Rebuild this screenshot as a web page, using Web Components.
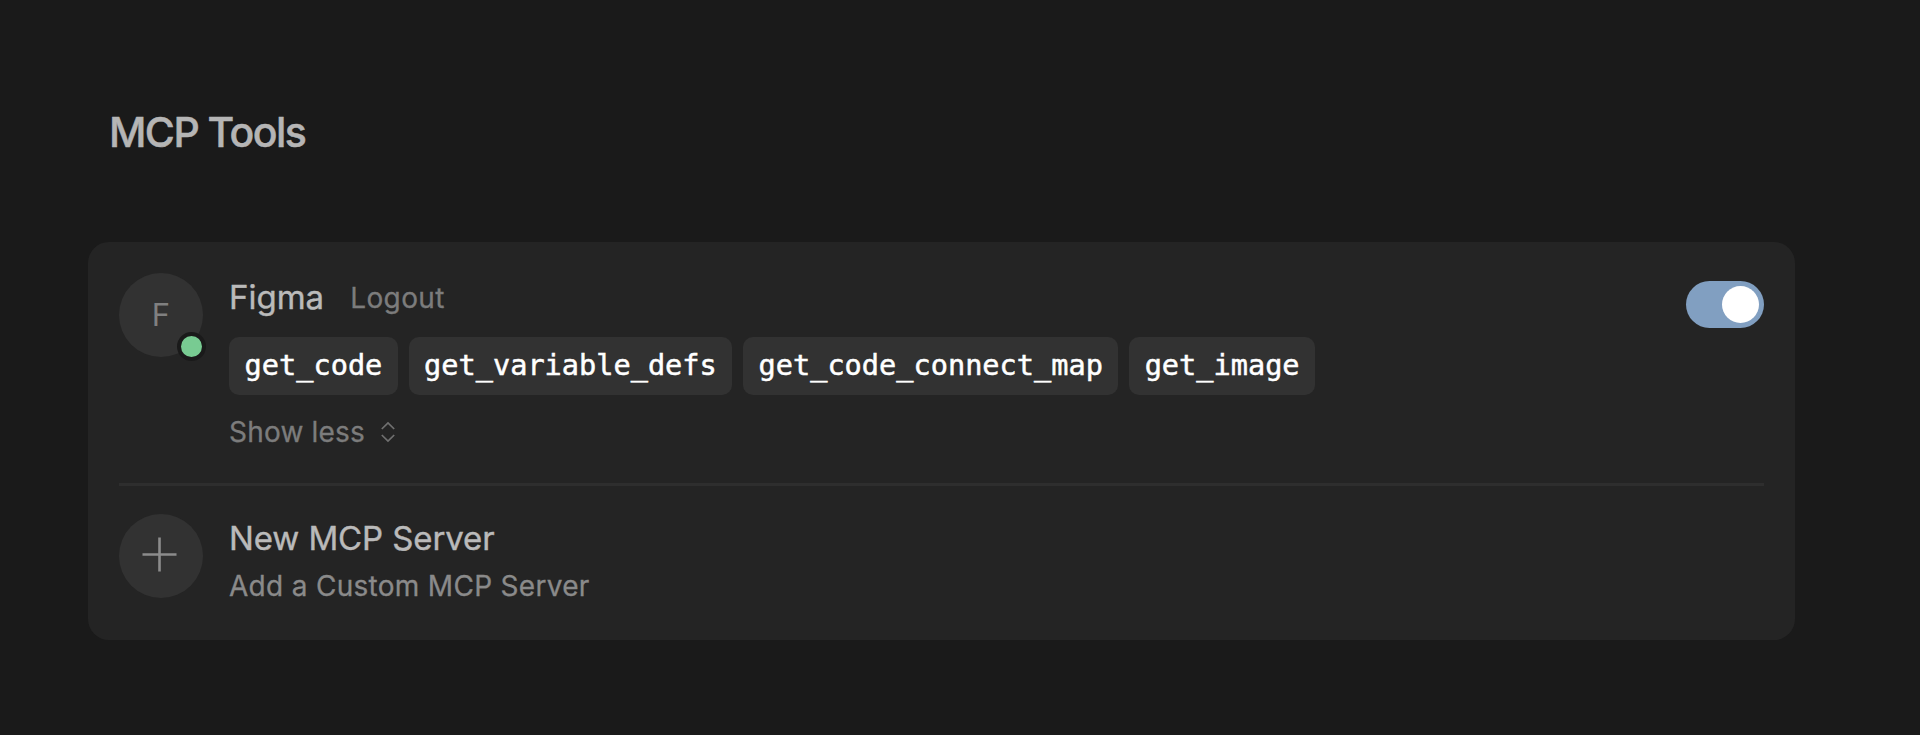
<!DOCTYPE html>
<html lang="en">
<head>
<meta charset="utf-8">
<title>MCP Tools</title>
<style>
html,body{margin:0;background:#1a1a1a;height:100%;overflow:hidden}
body{font-family:Inter,"Liberation Sans",sans-serif;color:#b8b8b8}
</style>
</head>
<body>
<mcp-page>
  <span slot="title">MCP Tools</span>
  <mcp-server>
    <mcp-avatar slot="avatar" online>F</mcp-avatar>
    <span slot="name">Figma</span>
    <span slot="action">Logout</span>
    <tool-chip>get_code</tool-chip>
    <tool-chip>get_variable_defs</tool-chip>
    <tool-chip>get_code_connect_map</tool-chip>
    <tool-chip>get_image</tool-chip>
    <span slot="more">Show less</span>
    <toggle-switch slot="toggle"></toggle-switch>
  </mcp-server>
  <mcp-new>
    <mcp-avatar slot="avatar"><plus-icon></plus-icon></mcp-avatar>
    <span slot="name">New MCP Server</span>
    <span slot="hint">Add a Custom MCP Server</span>
  </mcp-new>
</mcp-page>
<script>
const define = (name, html) => customElements.define(name, class extends HTMLElement {
  constructor() {
    super();
    this.attachShadow({mode: 'open'}).innerHTML = html;
  }
});

define('mcp-page', `<style>
:host{display:block;box-sizing:border-box;height:735px;padding:107px 125px 0 88px}
h1{margin:0 0 85px;padding-left:21px;font-size:41px;line-height:50px;font-weight:500;letter-spacing:-1.55px;color:#b5b5b5;white-space:nowrap;-webkit-text-stroke:.5px #b5b5b5}
section{display:flex;flex-direction:column;box-sizing:border-box;height:398px;padding:31px;border-radius:21px;background:#242424}
</style><h1><slot name="title"></slot></h1><section><slot></slot></section>`);

define('mcp-server', `<style>
:host{display:flex;box-sizing:border-box;height:213px;border-bottom:3px solid #2e2e2e}
.body{flex:1;padding-left:26px;display:flex;flex-direction:column}
.head{display:flex;align-items:baseline;height:40px;margin-top:4px;gap:26px;white-space:nowrap}
.name{font-size:33px;line-height:40px;letter-spacing:0;color:#bababa;-webkit-text-stroke:.4px #bababa}
.action{font-size:28px;line-height:34px;color:#7c7c7c;letter-spacing:.4px;-webkit-text-stroke:.3px #7c7c7c;position:relative;top:-1px}
.chips{display:flex;gap:10.600px;margin-top:20px}
.more{display:flex;align-items:center;gap:15px;height:36px;margin-top:19px;font-size:28px;letter-spacing:.2px;color:#7c7c7c;white-space:nowrap;-webkit-text-stroke:.3px #7c7c7c}
svg{display:block}
.side{padding-top:8px}
</style>
<slot name="avatar"></slot>
<div class="body">
<div class="head"><span class="name"><slot name="name"></slot></span><span class="action"><slot name="action"></slot></span></div>
<div class="chips"><slot></slot></div>
<div class="more"><slot name="more"></slot><svg width="16" height="22" viewBox="0 0 16 22" fill="none" stroke="#707070" stroke-width="1.7"><path d="M1.8 8 8 2l6.200 6M1.8 14 8 20l6.200-6"/></svg></div>
</div>
<div class="side"><slot name="toggle"></slot></div>`);

define('mcp-new', `<style>
:host{display:flex;padding-top:28px}
.body{padding-left:26px;white-space:nowrap}
.name{margin-top:4px;font-size:33px;line-height:40px;letter-spacing:-.1px;color:#bababa;-webkit-text-stroke:.4px #bababa}
.hint{margin-top:11px;font-size:28px;line-height:34px;letter-spacing:.3px;color:#8a8a8a;-webkit-text-stroke:.3px #8a8a8a}
</style>
<slot name="avatar"></slot>
<div class="body"><div class="name"><slot name="name"></slot></div><div class="hint"><slot name="hint"></slot></div></div>`);

define('mcp-avatar', `<style>
:host{position:relative;display:flex;flex:none;align-items:center;justify-content:center;width:84px;height:84px;border-radius:50%;background:#323232;color:#808080;font-size:31px;line-height:36px;padding-bottom:0}
i{display:none;position:absolute;left:58px;top:58.500px;width:21px;height:21px;border:4.500px solid #1a1a1a;border-radius:50%;background:#78cb92}
:host([online]) i{display:block}
</style><slot></slot><i></i>`);

define('plus-icon', `<style>:host{display:block;margin:-4px 3px 0 0}svg{display:block}</style>
<svg width="35" height="35" viewBox="0 0 35 35" stroke="#8c8c8c" stroke-width="2.6"><path d="M17.500 .5v34M.5 17.500h34"/></svg>`);

define('tool-chip', `<style>
:host{display:flex;align-items:center;box-sizing:border-box;height:58px;padding:0 15.600px 2px;border-radius:10px;background:#323232;color:#fff;font:28.600px/34px "DejaVu Sans Mono",monospace;white-space:nowrap;-webkit-text-stroke:.5px #fff}
</style><slot></slot>`);

define('toggle-switch', `<style>
:host{display:flex;align-items:center;justify-content:flex-end;box-sizing:border-box;width:78px;height:47px;padding:0 5.500px;border-radius:24px;background:#819fc1}
b{width:37px;height:37px;border-radius:50%;background:#fff}
</style><b></b>`);
</script>
</body>
</html>
